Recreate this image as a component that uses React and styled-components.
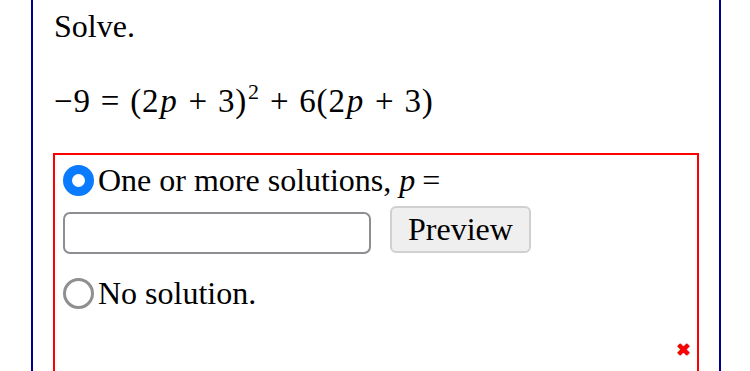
import React, { useState } from "react";
import styled, { createGlobalStyle } from "styled-components";

const Global = createGlobalStyle`
  html, body { margin: 0; padding: 0; background: #fff; }
  body { font-family: "Liberation Serif", "Times New Roman", serif; font-size: 32px; color: #000; }
  * { box-sizing: border-box; }
`;

const St = {
  Page: styled.div`
    width: 750px;
    height: 371px;
    overflow: hidden;
  `,
  Question: styled.div`
    margin-left: 31px;
    width: 690px;
    min-height: 400px;
    border-left: 2px solid #00008b;
    border-right: 2px solid #00008b;
    padding: 8px 20px 0 21px;
  `,
  Prompt: styled.p`
    margin: 0;
    line-height: 36px;
  `,
  Equation: styled.div`
    margin-top: 39px;
    font-family: "Liberation Serif", serif;
    font-size: 33px;
    line-height: 37px;
    letter-spacing: 0.8px;
    i { font-style: italic; margin: 0 1px; }
    sup { font-size: 22px; vertical-align: 0; position: relative; top: -13px; margin-left: 1px; }
  `,
  Op: styled.span`
    margin: 0 10px;
  `,
  AnswerBox: styled.div`
    position: relative;
    margin-top: 30px;
    margin-left: -1px;
    border: 2px solid #ff0000;
    height: 240px;
    padding: 9px 8px 0 8px;
  `,
  Option: styled.label`
    display: flex;
    align-items: center;
    gap: 4px;
    height: 32px;
    line-height: 32px;
    margin-top: ${(p) => p.$top || 0}px;
  `,
  Radio: styled.input.attrs({ type: "radio" })`
    appearance: none;
    margin: 0;
    width: 31px;
    height: 31px;
    flex: none;
    border-radius: 50%;
    border: 3px solid #8f8f8f;
    background: #fff;
    &:checked {
      border: 9px solid #0a7aff;
    }
  `,
  Var: styled.i`
    margin: 0 7px 0 8px;
  `,
  InputRow: styled.div`
    display: flex;
    align-items: flex-start;
    gap: 19px;
    margin-top: 10px;
  `,
  TextBox: styled.input`
    width: 308px;
    height: 42px;
    border: 2px solid #8d8d92;
    border-radius: 7px;
    font-size: 24px;
    font-family: inherit;
    margin: 6px 0 0 0;
  `,
  Button: styled.button`
    width: 141px;
    height: 47px;
    border: 2px solid #d0d0d0;
    border-radius: 6px;
    background: #efefef;
    font-family: "Liberation Serif", serif;
    font-size: 32px;
    color: #000;
    padding: 0;
  `,
  Wrong: styled.span`
    position: absolute;
    right: 6px;
    top: 186px;
    color: #ff0000;
    font-family: "DejaVu Sans", sans-serif;
    font-size: 18px;
    font-weight: bold;
    line-height: 18px;
    text-shadow: 0 0 1px #600;
  `,
};

export default function App() {
  const [choice, setChoice] = useState("some");
  return (
    <St.Page>
      <Global />
      <St.Question>
        <St.Prompt>Solve.</St.Prompt>
        <St.Equation>
          −9<St.Op>=</St.Op>(2<i>p</i>
          <St.Op>+</St.Op>3)<sup>2</sup>
          <St.Op>+</St.Op>6(2<i>p</i>
          <St.Op>+</St.Op>3)
        </St.Equation>
        <St.AnswerBox>
          <St.Option>
            <St.Radio
              name="ans"
              checked={choice === "some"}
              onChange={() => setChoice("some")}
            />
            <span>
              One or more solutions,<St.Var>p</St.Var>=
            </span>
          </St.Option>
          <St.InputRow>
            <St.TextBox type="text" />
            <St.Button>Preview</St.Button>
          </St.InputRow>
          <St.Option $top={23}>
            <St.Radio
              name="ans"
              checked={choice === "none"}
              onChange={() => setChoice("none")}
            />
            <span>No solution.</span>
          </St.Option>
          <St.Wrong>✖</St.Wrong>
        </St.AnswerBox>
      </St.Question>
    </St.Page>
  );
}
